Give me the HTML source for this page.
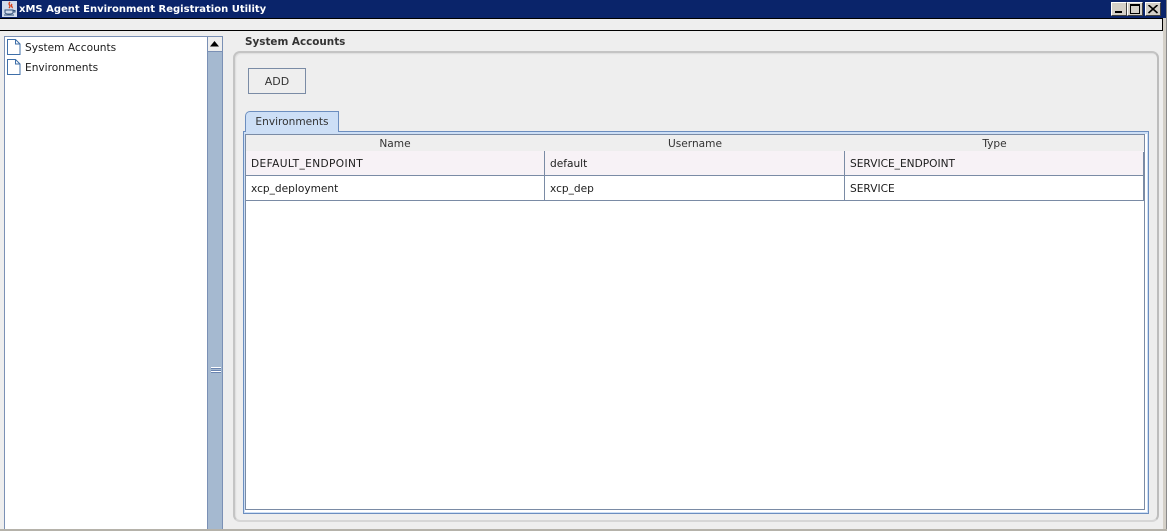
<!DOCTYPE html>
<html><head><meta charset="utf-8"><style>
html,body{margin:0;padding:0;width:1167px;height:531px;overflow:hidden;background:#eeeeee;font-family:"DejaVu Sans","Liberation Sans",sans-serif;font-size:10.6px;color:#1c1c1c}
div{position:absolute;box-sizing:border-box;white-space:nowrap}
svg{position:absolute}
.btn{top:2px;width:16px;height:14px;background:#d4d0c8;border:1px solid;border-color:#fff #404040 #404040 #fff}
.t{line-height:14px}
.h{top:137px;height:14px;line-height:14px;text-align:center;color:#333}
.line{background:#7a8ba5}
</style></head><body>
<div style="left:0;top:0;width:1167px;height:18px;background:#0a246a"></div>
<div style="left:19px;top:3px;color:#fff;font:bold 10px/14px 'DejaVu Sans',sans-serif">xMS Agent Environment Registration Utility</div>
<svg style="left:2px;top:1px" width="15" height="16" viewBox="0 0 15 16"><rect width="15" height="16" fill="#d3dcec"/><path d="M8 1c-3 3 2 3-1 6M10 3c-2 2 1 3 0 4" stroke="#d8421c" fill="none" stroke-width="1.4"/><path d="M3 9h8v2.500c0 1-1 1.500-4 1.500s-4-.5-4-1.500zM11 9.500h2v1.500h-2M2 14h10" stroke="#33527a" fill="none"/></svg>
<div class="btn" style="left:1111px"><svg style="left:3px;top:8px" width="8" height="3"><rect width="7" height="2" fill="#000"/></svg></div>
<div class="btn" style="left:1127px"><svg style="left:2px;top:1px" width="11" height="11"><path d="M.5 1.500h9v8h-9z" fill="none" stroke="#000"/><rect x="0" y="0" width="10" height="2" fill="#000"/></svg></div>
<div class="btn" style="left:1145px"><svg style="left:2px;top:2px" width="11" height="9"><path d="M.5 0l9 8M9.500 0l-9 8" stroke="#000" stroke-width="1.600"/></svg></div>
<div style="left:0;top:18px;width:1163px;height:13px;border-top:1px solid #000;border-bottom:1px solid #000;border-right:1px solid #000"></div>
<div style="left:1163px;top:0;width:4px;height:531px;background:#d4d0c8;border-right:1px solid #8a8a8a"></div>
<div style="left:1163px;top:0;width:3px;height:18px;background:#0a246a"></div>
<div style="left:0;top:529px;width:1167px;height:2px;background:#b5b2aa"></div>

<div style="left:4px;top:36px;width:219px;height:493px;background:#fff;border:1px solid #7a90b5;border-bottom:0"></div>
<svg style="left:7px;top:39px" width="14" height="17"><path d="M.5.500h8l4.500 4.500v10.500H.5zM8.500.500v4.500H13" fill="#fff" stroke="#3f6fa8"/></svg>
<svg style="left:7px;top:59px" width="14" height="17"><path d="M.5.500h8l4.500 4.500v10.500H.5zM8.500.500v4.500H13" fill="#fff" stroke="#3f6fa8"/></svg>
<div class="t" style="left:25px;top:41px">System Accounts</div>
<div class="t" style="left:25px;top:61px">Environments</div>
<div style="left:207px;top:36px;width:16px;height:493px;background:#a5b9d0;border:1px solid #7a90b5;border-bottom:0"></div>
<div style="left:208px;top:37px;width:14px;height:15px;background:#eeeeee;border-bottom:1px solid #7a90b5"></div>
<svg style="left:210px;top:41px" width="10" height="6"><path d="M0 5.500L4.500 0 9 5.500z" fill="#000"/></svg>
<svg style="left:211px;top:367px" width="10" height="7"><path d="M0 .500h10M0 4.500h10" stroke="#fff"/><path d="M0 1.500h10M0 3.500h10M0 5.500h10" stroke="#6a84b0"/></svg>

<div style="left:245px;top:35px;font:bold 10.4px/14px 'DejaVu Sans',sans-serif;color:#333">System Accounts</div>
<div style="left:233px;top:51px;width:926px;height:471px;border:2px solid #c4c4c4;border-radius:7px;border-right-color:#bdbdbd;border-bottom-color:#d6d6d6;box-shadow:inset 1px 1px 1px #dedede"></div>
<div style="left:248px;top:68px;width:58px;height:26px;border:1px solid #7a8ba5;background:#eeeeee;text-align:center;line-height:25px;color:#333;font-size:11px">ADD</div>

<div style="left:243px;top:131px;width:906px;height:383px;border:1px solid #6c8ebf;background:#cddff6"></div>
<div style="left:245px;top:111px;width:94px;height:21px;background:#cddff6;border:1px solid #6c8ebf;border-bottom:0;border-top-left-radius:5px;text-align:center;line-height:20px;color:#333;z-index:2">Environments</div>
<div style="left:245px;top:134px;width:902px;height:378px;background:#fff"></div>
<div style="left:245px;top:134px;width:900px;height:376px;background:#fff;border:1px solid #7a8ba5"></div>
<div style="left:246px;top:135px;width:898px;height:16px;background:#eeeeee"></div>
<div class="h" style="left:246px;width:298px">Name</div>
<div class="h" style="left:545px;width:300px">Username</div>
<div class="h" style="left:845px;width:299px">Type</div>
<div style="left:246px;top:151px;width:897px;height:24px;background:#f7f2f6"></div>
<div class="line" style="left:246px;top:175px;width:898px;height:1px"></div>
<div class="line" style="left:246px;top:200px;width:898px;height:1px"></div>
<div class="line" style="left:544px;top:151px;width:1px;height:49px"></div>
<div class="line" style="left:844px;top:151px;width:1px;height:49px"></div>
<div class="line" style="left:1143px;top:152px;width:2px;height:49px"></div>
<div class="t" style="left:251px;top:157px;letter-spacing:.37px">DEFAULT_ENDPOINT</div>
<div class="t" style="left:550px;top:157px">default</div>
<div class="t" style="left:850px;top:157px">SERVICE_ENDPOINT</div>
<div class="t" style="left:251px;top:182px">xcp_deployment</div>
<div class="t" style="left:550px;top:182px">xcp_dep</div>
<div class="t" style="left:850px;top:182px">SERVICE</div>
</body></html>
